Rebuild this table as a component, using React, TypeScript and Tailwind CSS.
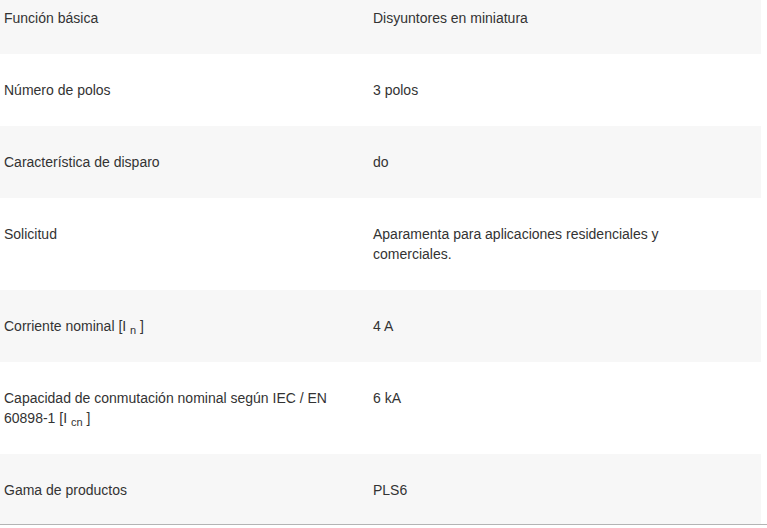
import React from "react";

type Row = { label: React.ReactNode; value: React.ReactNode };

const rows: Row[] = [
  { label: "Función básica", value: "Disyuntores en miniatura" },
  { label: "Número de polos", value: "3 polos" },
  { label: "Característica de disparo", value: "do" },
  { label: "Solicitud", value: "Aparamenta para aplicaciones residenciales y comerciales." },
  {
    label: (
      <>
        Corriente nominal [I <sub className="text-[11px] leading-none">n</sub> ]
      </>
    ),
    value: "4 A",
  },
  {
    label: (
      <>
        Capacidad de conmutación nominal según IEC / EN 60898-1 [I <sub className="text-[11px] leading-none">cn</sub> ]
      </>
    ),
    value: "6 kA",
  },
  { label: "Gama de productos", value: "PLS6" },
];

function App() {
  return (
    <div className="w-[767px] h-[528px] overflow-hidden bg-white text-[#333] text-[14px] leading-5 font-['Liberation_Sans',Arial,sans-serif]">
      <div className="-mt-[18px] border-b border-[#b4b4b4]">
        {rows.map((r, i) => {
          const last = i === rows.length - 1;
          return (
            <div
              key={i}
              className={`w-[761px] grid grid-cols-[369px_392px] ${i % 2 === 0 ? "bg-[#f7f7f7]" : "bg-white"}`}
            >
              <div className={`pl-1 pr-1 pt-[26px] ${last ? "pb-[24px]" : "pb-[26px]"}`}>{r.label}</div>
              <div className={`pl-1 pr-10 pt-[26px] ${last ? "pb-[24px]" : "pb-[26px]"}`}>{r.value}</div>
            </div>
          );
        })}
      </div>
    </div>
  );
}

export default App;
